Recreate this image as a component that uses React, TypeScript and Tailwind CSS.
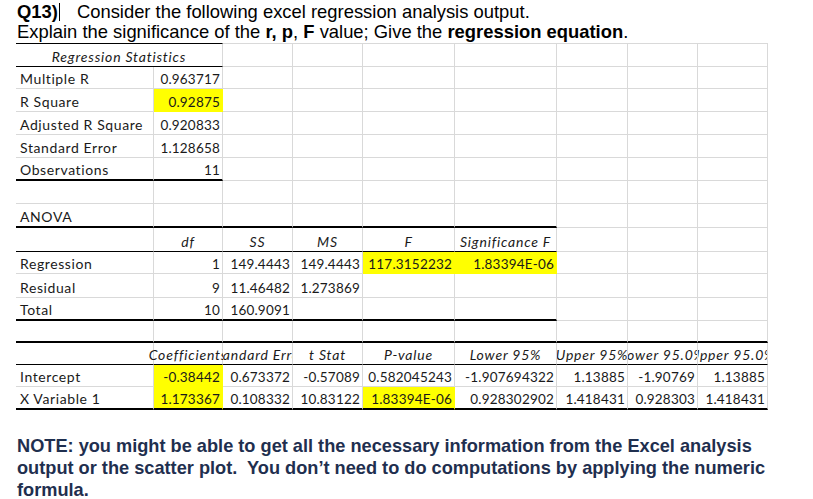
import React from 'react'

type Cell = {
  t?: string
  a?: 'l' | 'r' | 'c'
  i?: boolean
  y?: boolean
  span?: number
  spill?: boolean
}

const colW = [138, 69, 70, 70, 92, 102, 71, 70, 70]
const rowH = [24, 22, 23, 23, 23, 23, 23, 24, 24, 22, 24, 23, 22, 22, 22, 23]

const L = (t: string): Cell => ({ t, a: 'l' })
const R = (t: string, y = false): Cell => ({ t, a: 'r', y })
const H = (t: string, spill = false): Cell => ({ t, a: 'c', i: true, spill })

const rows: Cell[][] = [
  [{ t: 'Regression Statistics', a: 'c', i: true, span: 2 }],
  [L('Multiple R'), R('0.963717')],
  [L('R Square'), R('0.92875', true)],
  [L('Adjusted R Square'), R('0.920833')],
  [L('Standard Error'), R('1.128658')],
  [L('Observations'), R('11')],
  [],
  [L('ANOVA')],
  [{}, H('df'), H('SS'), H('MS'), H('F'), H('Significance F')],
  [L('Regression'), R('1'), R('149.4443'), R('149.4443'), R('117.3152232', true), R('1.83394E-06', true)],
  [L('Residual'), R('9'), R('11.46482'), R('1.273869')],
  [L('Total'), R('10'), R('160.9091')],
  [],
  [{}, H('Coefficients', true), H('Standard Error'), H('t Stat'), H('P-value'), H('Lower 95%'), H('Upper 95%'), H('Lower 95.0%'), H('Upper 95.0%')],
  [L('Intercept'), R('-0.38442', true), R('0.673372'), R('-0.57089'), R('0.582045243'), R('-1.907694322'), R('1.13885'), R('-1.90769'), R('1.13885')],
  [L('X Variable 1'), R('1.173367', true), R('0.108332'), R('10.83122'), R('1.83394E-06', true), R('0.928302902'), R('1.418431'), R('0.928303'), R('1.418431')],
]

// bottom rule per row: [kind, last column it reaches]
const rules: Record<number, ['thin' | 'thick', number]> = {
  0: ['thin', 1],
  5: ['thick', 1],
  7: ['thick', 5],
  8: ['thin', 5],
  11: ['thick', 5],
  12: ['thick', 8],
  13: ['thin', 8],
  15: ['thick', 8],
}

function Row({ cells, r }: { cells: Cell[]; r: number }) {
  const out: React.ReactNode[] = []
  let c = 0
  let k = 0
  while (c < colW.length) {
    const cell = cells[k] || {}
    const span = cell.span || 1
    const w = colW.slice(c, c + span).reduce((s, v) => s + v, 0)
    const rule = rules[r]
    const ruled = rule && c <= rule[1]
    const bottom = ruled
      ? rule[0] === 'thick'
        ? 'border-b-2 border-b-black'
        : 'border-b border-b-black'
      : cell.y
        ? 'border-b border-b-[#ffff00]'
        : 'border-b border-b-[#d9d9d9]'
    const top = r === 0 ? (c <= 1 ? 'border-t border-t-black' : 'border-t border-t-[#d9d9d9]') : ''
    const right = cell.y ? 'border-r border-r-[#ffff00]' : 'border-r border-r-[#d9d9d9]'
    const align =
      cell.a === 'r'
        ? 'justify-end pr-[2px] text-[13.5px] tracking-[0.2px]'
        : cell.a === 'c'
          ? 'justify-center text-[14px] tracking-[0.8px]'
          : 'justify-start pl-[4px] text-[14px] tracking-[0.6px]'
    out.push(
      <div
        key={c}
        style={{ width: w }}
        className={`flex items-end pb-[1px] whitespace-nowrap shrink-0 ${align} ${bottom} ${top} ${right} ${
          cell.spill ? 'relative [clip-path:inset(-2px_0_0_-30px)] overflow-visible' : 'overflow-hidden'
        } ${cell.y ? 'bg-[#ffff00]' : ''} ${cell.i ? 'italic' : ''}`}
      >
        {cell.t && <span className="shrink-0">{cell.t}</span>}
      </div>
    )
    c += span
    k += 1
  }
  return (
    <div style={{ height: rowH[r] }} className="flex">
      {out}
    </div>
  )
}

export default function App() {
  return (
    <div className="w-[813px] h-[499px] bg-white overflow-hidden relative">
      <div className="h-[43px] pt-[2px] pl-[17px] font-['Liberation_Sans',Arial,sans-serif] text-[18.4px] leading-[20px] text-black">
        <div className="flex items-center">
          <span className="font-bold">Q13)</span>
          <span className="inline-block w-[1px] h-[18px] bg-black ml-[1px]" />
          <span className="ml-[17px]">Consider the following excel regression analysis output.</span>
        </div>
        <div>
          Explain the significance of the <b>r, p</b>, <b>F</b> value; Give the <b>regression equation</b>.
        </div>
      </div>

      <div className="ml-[16px] w-[752px] font-['Lato','Open_Sans',sans-serif] leading-[16px] text-[#1a1a1a]">
        {rows.map((cells, r) => (
          <Row key={r} cells={cells} r={r} />
        ))}
      </div>

      <div className="mt-[25px] pl-[17px] pr-[8px] font-['Liberation_Sans',Arial,sans-serif] font-bold text-[18.2px] leading-[22px] text-[#1f2f4f]">
        NOTE: you might be able to get all the necessary information from the Excel analysis
        <br />
        output or the scatter plot.&nbsp; You don’t need to do computations by applying the numeric
        <br />
        formula.
      </div>
    </div>
  )
}
